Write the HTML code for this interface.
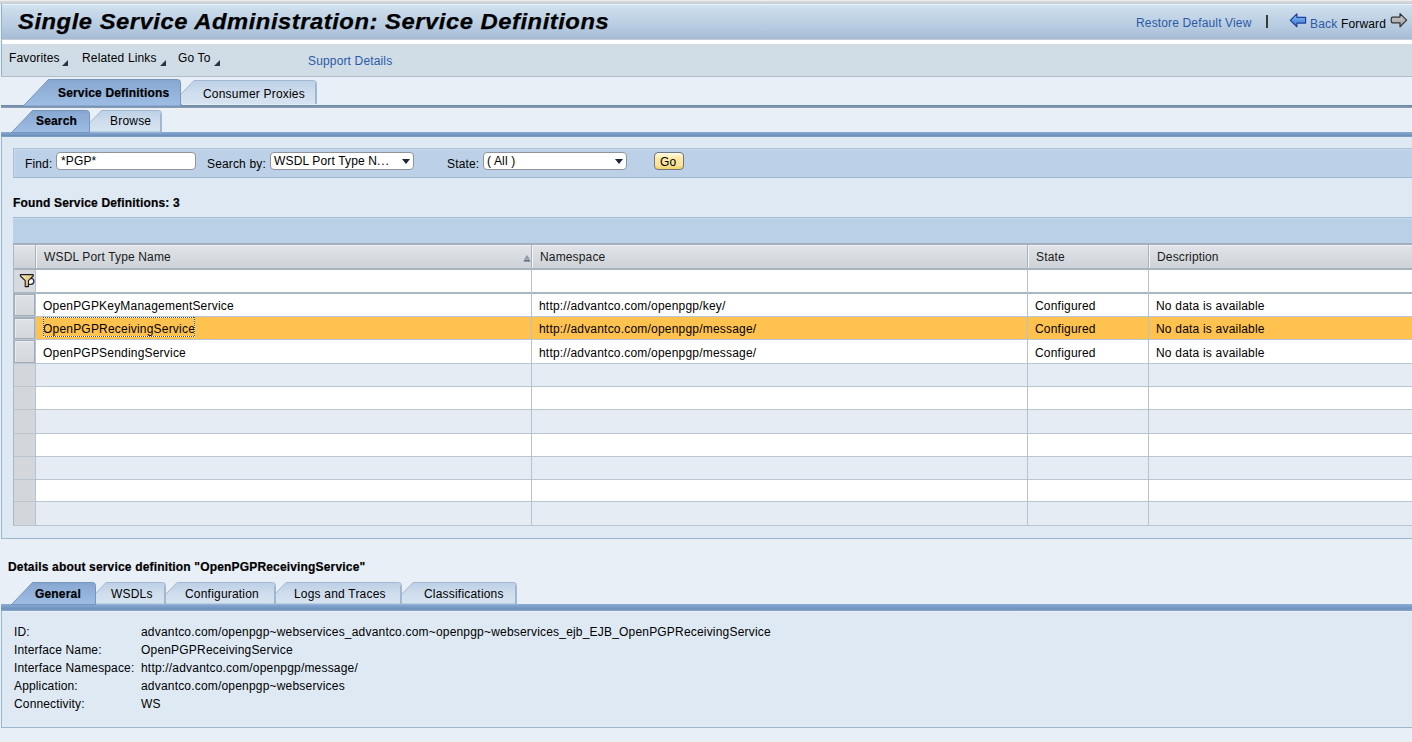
<!DOCTYPE html>
<html><head><meta charset="utf-8"><style>
*{margin:0;padding:0;box-sizing:border-box}
html,body{width:1412px;height:742px;overflow:hidden}
body{background:#e9eff6;font-family:"Liberation Sans",sans-serif;font-size:12px;color:#000;position:relative;letter-spacing:0.15px}
.a{position:absolute;white-space:nowrap;line-height:14px}
.b{position:absolute}
.lnk{color:#2b5aa6}
.tri{position:absolute;width:0;height:0;border-left:6px solid transparent;border-bottom:6px solid #26354a}
.dd{position:absolute;width:0;height:0;border-left:4.5px solid transparent;border-right:4.5px solid transparent;border-top:5px solid #1c2636}
</style></head><body>
<div class="b" style="left:0px;top:0px;width:1412px;height:4px;background:linear-gradient(#eeeeee 0,#eeeeee 1px,#d4d4d4 1px,#d4d4d4 2px,#d0d7df 2px,#d0d7df 3px,#c0ccd6 3px)"></div>
<div class="b" style="left:0px;top:4px;width:1px;height:73px;background:#eef2f6"></div>
<div class="b" style="left:1px;top:4px;width:1411px;height:35px;border-left:1px solid #8fb0cc;background:linear-gradient(#eef3f8 0,#eef3f8 1px,#d3e2ef 1px,#cadbea 6px,#b8cce1 22px,#a9bfd8 33px,#a5bad3 35px)"></div>
<div class="b" style="left:1px;top:39px;width:1411px;height:5px;background:#fff;border-top:1px solid #c4ccd5;border-left:1px solid #8fb0cc"></div>
<div class="a" id="title" style="left:17.5px;top:6.5px;font-size:22px;font-weight:bold;font-style:italic;letter-spacing:0.5px;line-height:30px;transform-origin:0 0;transform:scaleX(1.08);-webkit-text-stroke:0.25px #000">Single Service Administration: Service Definitions</div>
<div class="a lnk" style="left:1136px;top:16px;">Restore Default View</div>
<div class="b" style="left:1266px;top:15px;width:2px;height:13px;background:#3a3a3a"></div>
<svg class="b" style="left:1289px;top:12px" width="18" height="17" viewBox="0 0 18 17"><defs><linearGradient id="gB" x1="0" y1="0" x2="0" y2="1"><stop offset="0" stop-color="#8cc4f4"/><stop offset="0.5" stop-color="#5e9ae2"/><stop offset="1" stop-color="#3f74c8"/></linearGradient></defs><path d="M1.3 8.4 L7.9 1.8 L7.9 5.3 L16.6 5.3 L16.6 11.1 L7.9 11.1 L7.9 14.7 Z" fill="url(#gB)" stroke="#1d3f9e" stroke-width="1.2" stroke-linejoin="round"/></svg>
<div class="a lnk" style="left:1310px;top:17px;">Back</div>
<div class="a" style="left:1341px;top:17px;">Forward</div>
<svg class="b" style="left:1390px;top:12px" width="18" height="17" viewBox="0 0 18 17"><defs><linearGradient id="gFw" x1="0" y1="0" x2="0" y2="1"><stop offset="0" stop-color="#d0d0d0"/><stop offset="1" stop-color="#9a9a9a"/></linearGradient></defs><path d="M16.6 8.2 L10 1.6 L10 5.1 L2.5 5.1 Q1.2 5.1 1.2 7.9 Q1.2 10.8 2.5 10.8 L10 10.8 L10 14.8 Z" fill="url(#gFw)" stroke="#333" stroke-width="1.2" stroke-linejoin="round"/></svg>
<div class="b" style="left:1px;top:44px;width:1411px;height:33px;background:#d0dce6;border-left:1px solid #8fb0cc;border-bottom:1px solid #aebccb"></div>
<div class="a" style="left:9px;top:51px;">Favorites</div>
<div class="tri" style="left:62px;top:60px"></div>
<div class="a" style="left:82px;top:51px;">Related Links</div>
<div class="tri" style="left:160px;top:60px"></div>
<div class="a" style="left:178px;top:51px;">Go To</div>
<div class="tri" style="left:214px;top:60px"></div>
<div class="a lnk" style="left:308px;top:54px;">Support Details</div>
<svg class="b" style="left:0;top:105px" width="1412" height="3" viewBox="0 105 1412 3"><defs><linearGradient id="gL1" x1="0" y1="0" x2="0" y2="1"><stop offset="0" stop-color="#6a86a6"/><stop offset="1" stop-color="#8a9fb6"/></linearGradient></defs><rect x="1" y="105" width="1411" height="3" fill="url(#gL1)"/></svg>
<svg class="b" style="left:0;top:77px" width="1412" height="31" viewBox="0 77 1412 31"><defs><linearGradient id="gA" x1="0" y1="0" x2="0" y2="1"><stop offset="0" stop-color="#84a5cf"/><stop offset="0.15" stop-color="#8babd4"/><stop offset="1" stop-color="#9dbde4"/></linearGradient><linearGradient id="gI" x1="0" y1="0" x2="0" y2="1"><stop offset="0" stop-color="#bccfe5"/><stop offset="0.5" stop-color="#cfdded"/><stop offset="1" stop-color="#d7e3f0"/></linearGradient></defs><path d="M171.2 104.5 L194.0 80.5 L313.5 80.5 Q316.5 80.5 316.5 83.5 L316.5 104.5 Z" fill="url(#gI)" stroke="#a3b9d2" stroke-width="1"/><rect x="315.0" y="83.5" width="1" height="21.0" fill="#9db5cf"/><path d="M23.3 106 L48.5 79.5 L177.5 79.5 Q180.5 79.5 180.5 82.5 L180.5 106 Z" fill="url(#gA)" stroke="#7896bd" stroke-width="1"/><rect x="0" y="0" width="1412" height="0" style="fill:none"/></svg>
<div class="b" style="left:182px;top:104px;width:135px;height:1px;background:#e6edf5"></div>
<svg class="b" style="left:0;top:107px" width="1412" height="31" viewBox="0 107 1412 31"><defs><linearGradient id="gL" x1="0" y1="0" x2="0" y2="1"><stop offset="0" stop-color="#8aabd5"/><stop offset="0.35" stop-color="#7c9fcb"/><stop offset="0.7" stop-color="#6f92bd"/><stop offset="1" stop-color="#86a4c8"/></linearGradient></defs><rect x="0" y="108" width="1412" height="2" fill="#edf1f6"/><rect x="1" y="132" width="1411" height="5" fill="url(#gL)"/></svg>
<svg class="b" style="left:0;top:107px" width="1412" height="26" viewBox="0 107 1412 26"><defs><linearGradient id="gA" x1="0" y1="0" x2="0" y2="1"><stop offset="0" stop-color="#84a5cf"/><stop offset="0.15" stop-color="#8babd4"/><stop offset="1" stop-color="#9dbde4"/></linearGradient><linearGradient id="gI" x1="0" y1="0" x2="0" y2="1"><stop offset="0" stop-color="#bccfe5"/><stop offset="0.5" stop-color="#cfdded"/><stop offset="1" stop-color="#d7e3f0"/></linearGradient></defs><path d="M81.1 132 L101.5 110.5 L158.5 110.5 Q161.5 110.5 161.5 113.5 L161.5 132 Z" fill="url(#gI)" stroke="#a3b9d2" stroke-width="1"/><rect x="160.0" y="113.5" width="1" height="18.5" fill="#9db5cf"/><path d="M11.6 132.5 L32.5 110.5 L86.5 110.5 Q89.5 110.5 89.5 113.5 L89.5 132.5 Z" fill="url(#gA)" stroke="#7896bd" stroke-width="1"/><rect x="0" y="132" width="1412" height="0" style="fill:none"/></svg>
<div class="a" style="left:58px;top:86px;font-weight:bold;letter-spacing:0.17px;-webkit-text-stroke:0.2px #000">Service Definitions</div>
<div class="a" style="left:203px;top:87px;letter-spacing:0.2px">Consumer Proxies</div>
<div class="a" style="left:36px;top:114px;font-weight:bold;letter-spacing:0.17px;-webkit-text-stroke:0.2px #000">Search</div>
<div class="a" style="left:110px;top:114px;letter-spacing:0.2px">Browse</div>
<div class="b" style="left:1px;top:137px;width:1411px;height:402px;background:#dee9f4;border-left:1px solid #9cb6d0;border-bottom:1px solid #9cb6d0"></div>
<div class="b" style="left:13px;top:148px;width:1399px;height:30px;background:#bcd1e7;border-top:1px solid #adc4dd;border-left:1px solid #a9c0da;border-bottom:1px solid #9db5cf;box-shadow:inset 1px 1px 0 #cbdaeb"></div>
<div class="a" style="left:25px;top:157px;">Find:</div>
<div class="b" style="left:56px;top:152px;width:140px;height:18px;background:#fff;border:1px solid #8e949a;border-radius:4px"></div>
<div class="a" style="left:61px;top:154px;">*PGP*</div>
<div class="a" style="left:207px;top:157px;">Search by:</div>
<div class="b" style="left:270px;top:152px;width:143.5px;height:18px;background:#fff;border:1px solid #8e949a;border-radius:4px"></div>
<div class="a" style="left:274px;top:154px;">WSDL Port Type N<span style="letter-spacing:0.9px">...</span></div>
<div class="dd" style="left:401.5px;top:159px"></div>
<div class="a" style="left:447px;top:157px;">State:</div>
<div class="b" style="left:483px;top:152px;width:144px;height:18px;background:#fff;border:1px solid #8e949a;border-radius:4px"></div>
<div class="a" style="left:487px;top:154px;">( All )</div>
<div class="dd" style="left:615px;top:159px"></div>
<div class="b" style="left:654px;top:152px;width:30px;height:18px;background:linear-gradient(#fffbe6 0,#fff3c4 3px,#fde9a6 5px,#fbe39a 12px,#f3d66e 15px);border:1px solid #6f7784;border-radius:4px"></div>
<div class="a" style="left:660px;top:155px;">Go</div>
<div class="a" style="left:13px;top:196px;font-weight:bold;letter-spacing:0.17px;-webkit-text-stroke:0.2px #000">Found Service Definitions: 3</div>
<div class="b" style="left:13px;top:217px;width:1399px;height:27px;background:#bad0e6;border-top:1px solid #a5bcd4;box-shadow:inset 0 1px 0 #c6d8eb"></div>
<div class="b" style="left:13px;top:243px;width:1399px;height:27px;background:linear-gradient(#a4afbb 0,#a4afbb 1.5px,#eef1f3 2px,#eef1f3 3px,#e0e3e7 3px,#d9dde2 12px,#cdd2d8 25px,#a9b3be 25px,#a9b3be 27px)"></div>
<div class="b" style="left:13px;top:243px;width:1px;height:283px;background:#a9b6c3"></div>
<div class="b" style="left:35px;top:245px;width:1px;height:23px;background:#a6b1bc"></div>
<div class="b" style="left:36px;top:245px;width:1px;height:23px;background:#f4f6f8"></div>
<div class="b" style="left:531px;top:245px;width:1px;height:23px;background:#a6b1bc"></div>
<div class="b" style="left:532px;top:245px;width:1px;height:23px;background:#f4f6f8"></div>
<div class="b" style="left:1027px;top:245px;width:1px;height:23px;background:#a6b1bc"></div>
<div class="b" style="left:1028px;top:245px;width:1px;height:23px;background:#f4f6f8"></div>
<div class="b" style="left:1148px;top:245px;width:1px;height:23px;background:#a6b1bc"></div>
<div class="b" style="left:1149px;top:245px;width:1px;height:23px;background:#f4f6f8"></div>
<div class="a" style="left:44px;top:250px;color:#1a1a1a">WSDL Port Type Name</div>
<div class="a" style="left:540px;top:250px;color:#1a1a1a">Namespace</div>
<div class="a" style="left:1036px;top:250px;color:#1a1a1a">State</div>
<div class="a" style="left:1157px;top:250px;color:#1a1a1a">Description</div>
<svg class="b" style="left:523px;top:254px" width="8" height="8" viewBox="0 0 8 8"><path d="M4 1.6 L6.3 5.2 L1.7 5.2 Z" fill="#a0a9b4" stroke="#6d7886" stroke-width="0.6"/><rect x="0.8" y="6.2" width="6.4" height="1.3" fill="#4d5866"/></svg>
<div class="b" style="left:14px;top:270px;width:1398px;height:24px;background:#fff;border-bottom:2px solid #aab6c2"></div>
<div class="b" style="left:14px;top:270px;width:21px;height:22px;background:#d6dade"></div>
<svg class="b" style="left:14px;top:269px" width="22" height="24" viewBox="0 0 22 24"><defs><linearGradient id="gF" x1="0" y1="0" x2="1" y2="1"><stop offset="0" stop-color="#fbf0c8"/><stop offset="1" stop-color="#d4a843"/></linearGradient></defs><path d="M14 9.4 L16.8 9.4 Q19.9 9.4 19.9 12.3 Q19.9 15.3 16.8 15.3 L14 15.3 Z" fill="#f8f9fc" stroke="#23315a" stroke-width="1.3"/><path d="M6.4 5.6 L19.2 5.6 L19.2 7 L14.5 11.6 L14.5 17.6 L11.2 17.6 L11.2 11.6 L6.4 7 Z" fill="url(#gF)" stroke="#1b1b26" stroke-width="1.1" stroke-linejoin="round"/></svg>
<div class="b" style="left:14px;top:294px;width:1398px;height:23px;background:#ffffff;border-bottom:1px solid #b9c5d1"></div>
<div class="b" style="left:14px;top:294px;width:21px;height:22px;background:linear-gradient(#dfe2e6,#d3d7dc);border:1px solid #a3adb7;box-shadow:inset 1px 1px 0 #e8eaed"></div>
<div class="a" style="left:43px;top:299px;letter-spacing:0.2px">OpenPGPKeyManagementService</div>
<div class="a" style="left:539px;top:299px;letter-spacing:0.2px">http://advantco.com/openpgp/key/</div>
<div class="a" style="left:1035px;top:299px;letter-spacing:0.2px">Configured</div>
<div class="a" style="left:1156px;top:299px;letter-spacing:0.2px">No data is available</div>
<div class="b" style="left:14px;top:317px;width:1398px;height:23px;background:#ffc24f;border-bottom:1px solid #b9c5d1"></div>
<div class="b" style="left:14px;top:317px;width:21px;height:22px;background:linear-gradient(#dfe2e6,#d3d7dc);border:1px solid #a3adb7;box-shadow:inset 1px 1px 0 #e8eaed;border-top:2px solid #a4afba"></div>
<div class="a" style="left:43px;top:322px;letter-spacing:0.2px">OpenPGPReceivingService</div>
<div class="a" style="left:539px;top:322px;letter-spacing:0.2px">http://advantco.com/openpgp/message/</div>
<div class="a" style="left:1035px;top:322px;letter-spacing:0.2px">Configured</div>
<div class="a" style="left:1156px;top:322px;letter-spacing:0.2px">No data is available</div>
<div class="b" style="left:14px;top:340px;width:1398px;height:24px;background:#ffffff;border-bottom:1px solid #b9c5d1"></div>
<div class="b" style="left:14px;top:340px;width:21px;height:23px;background:linear-gradient(#dfe2e6,#d3d7dc);border:1px solid #a3adb7;box-shadow:inset 1px 1px 0 #e8eaed"></div>
<div class="a" style="left:43px;top:346px;letter-spacing:0.2px">OpenPGPSendingService</div>
<div class="a" style="left:539px;top:346px;letter-spacing:0.2px">http://advantco.com/openpgp/message/</div>
<div class="a" style="left:1035px;top:346px;letter-spacing:0.2px">Configured</div>
<div class="a" style="left:1156px;top:346px;letter-spacing:0.2px">No data is available</div>
<div class="b" style="left:14px;top:364px;width:1398px;height:23px;background:#e6ecf4;border-bottom:1px solid #b9c5d1"></div>
<div class="b" style="left:14px;top:364px;width:21px;height:22px;background:#d3d7dc"></div>
<div class="b" style="left:14px;top:387px;width:1398px;height:23px;background:#ffffff;border-bottom:1px solid #b9c5d1"></div>
<div class="b" style="left:14px;top:387px;width:21px;height:22px;background:#d3d7dc"></div>
<div class="b" style="left:14px;top:410px;width:1398px;height:24px;background:#e6ecf4;border-bottom:1px solid #b9c5d1"></div>
<div class="b" style="left:14px;top:410px;width:21px;height:23px;background:#d3d7dc"></div>
<div class="b" style="left:14px;top:434px;width:1398px;height:23px;background:#ffffff;border-bottom:1px solid #b9c5d1"></div>
<div class="b" style="left:14px;top:434px;width:21px;height:22px;background:#d3d7dc"></div>
<div class="b" style="left:14px;top:457px;width:1398px;height:23px;background:#e6ecf4;border-bottom:1px solid #b9c5d1"></div>
<div class="b" style="left:14px;top:457px;width:21px;height:22px;background:#d3d7dc"></div>
<div class="b" style="left:14px;top:480px;width:1398px;height:22px;background:#ffffff;border-bottom:1px solid #b9c5d1"></div>
<div class="b" style="left:14px;top:480px;width:21px;height:21px;background:#d3d7dc"></div>
<div class="b" style="left:14px;top:502px;width:1398px;height:24px;background:#e6ecf4;border-bottom:1px solid #b9c5d1"></div>
<div class="b" style="left:14px;top:502px;width:21px;height:23px;background:#d3d7dc"></div>
<div class="b" style="left:35px;top:270px;width:1px;height:255px;background:#b6c2ce"></div>
<div class="b" style="left:531px;top:270px;width:1px;height:255px;background:#b6c2ce"></div>
<div class="b" style="left:1027px;top:270px;width:1px;height:255px;background:#b6c2ce"></div>
<div class="b" style="left:1148px;top:270px;width:1px;height:255px;background:#b6c2ce"></div>
<div class="b" style="left:43px;top:317px;width:152px;height:1px;background:repeating-linear-gradient(90deg,#4a4a4a 0 1px,#fffbe8 1px 2px)"></div>
<div class="b" style="left:43px;top:336px;width:152px;height:1px;background:repeating-linear-gradient(90deg,#4a4a4a 0 1px,#fffbe8 1px 2px)"></div>
<div class="b" style="left:43px;top:317px;width:1px;height:20px;background:repeating-linear-gradient(180deg,#4a4a4a 0 1px,#fffbe8 1px 2px)"></div>
<div class="b" style="left:194px;top:317px;width:1px;height:20px;background:repeating-linear-gradient(180deg,#4a4a4a 0 1px,#fffbe8 1px 2px)"></div>
<div class="a" style="left:8px;top:560px;font-weight:bold;letter-spacing:0.17px;-webkit-text-stroke:0.2px #000">Details about service definition "OpenPGPReceivingService"</div>
<svg class="b" style="left:0;top:604px" width="1412" height="7" viewBox="0 604 1412 7"><defs><linearGradient id="gL2" x1="0" y1="0" x2="0" y2="1"><stop offset="0" stop-color="#8aabd5"/><stop offset="0.35" stop-color="#7c9fcb"/><stop offset="0.7" stop-color="#6f92bd"/><stop offset="1" stop-color="#8aa8cc"/></linearGradient></defs><rect x="1" y="604" width="1411" height="7" fill="url(#gL2)"/></svg>
<svg class="b" style="left:0;top:578px" width="1412" height="28" viewBox="0 578 1412 28"><defs><linearGradient id="gA" x1="0" y1="0" x2="0" y2="1"><stop offset="0" stop-color="#84a5cf"/><stop offset="0.15" stop-color="#8babd4"/><stop offset="1" stop-color="#9dbde4"/></linearGradient><linearGradient id="gI" x1="0" y1="0" x2="0" y2="1"><stop offset="0" stop-color="#bccfe5"/><stop offset="0.5" stop-color="#cfdded"/><stop offset="1" stop-color="#d7e3f0"/></linearGradient></defs><path d="M392.6 604 L413.0 582.5 L513.5 582.5 Q516.5 582.5 516.5 585.5 L516.5 604 Z" fill="url(#gI)" stroke="#a3b9d2" stroke-width="1"/><rect x="515.0" y="585.5" width="1" height="18.5" fill="#9db5cf"/><path d="M265.6 604 L286.0 582.5 L398.5 582.5 Q401.5 582.5 401.5 585.5 L401.5 604 Z" fill="url(#gI)" stroke="#a3b9d2" stroke-width="1"/><rect x="400.0" y="585.5" width="1" height="18.5" fill="#9db5cf"/><path d="M156.6 604 L177.0 582.5 L272.5 582.5 Q275.5 582.5 275.5 585.5 L275.5 604 Z" fill="url(#gI)" stroke="#a3b9d2" stroke-width="1"/><rect x="274.0" y="585.5" width="1" height="18.5" fill="#9db5cf"/><path d="M85.6 604 L106.0 582.5 L162.5 582.5 Q165.5 582.5 165.5 585.5 L165.5 604 Z" fill="url(#gI)" stroke="#a3b9d2" stroke-width="1"/><rect x="164.0" y="585.5" width="1" height="18.5" fill="#9db5cf"/><path d="M11.6 604.5 L32.5 582.5 L92.5 582.5 Q95.5 582.5 95.5 585.5 L95.5 604.5 Z" fill="url(#gA)" stroke="#7896bd" stroke-width="1"/><rect x="0" y="604" width="1412" height="0" style="fill:none"/></svg>
<div class="a" style="left:35px;top:587px;font-weight:bold;letter-spacing:0.17px;-webkit-text-stroke:0.2px #000">General</div>
<div class="a" style="left:111px;top:587px;letter-spacing:0.2px">WSDLs</div>
<div class="a" style="left:185px;top:587px;letter-spacing:0.2px">Configuration</div>
<div class="a" style="left:294px;top:587px;letter-spacing:0.2px">Logs and Traces</div>
<div class="a" style="left:424px;top:587px;letter-spacing:0.2px">Classifications</div>
<div class="b" style="left:1px;top:611px;width:1411px;height:117px;background:#dee9f4;border-left:1px solid #9cb6d0;border-bottom:1px solid #9cb6d0;box-shadow:inset 0 1px 0 #e9f0f8"></div>
<div class="a" style="left:14px;top:625px;">ID:</div>
<div class="a" style="left:141px;top:625px;letter-spacing:0.19px">advantco.com/openpgp~webservices_advantco.com~openpgp~webservices_ejb_EJB_OpenPGPReceivingService</div>
<div class="a" style="left:14px;top:643px;">Interface Name:</div>
<div class="a" style="left:141px;top:643px;letter-spacing:0.19px">OpenPGPReceivingService</div>
<div class="a" style="left:14px;top:661px;">Interface Namespace:</div>
<div class="a" style="left:141px;top:661px;letter-spacing:0.19px">http://advantco.com/openpgp/message/</div>
<div class="a" style="left:14px;top:679px;">Application:</div>
<div class="a" style="left:141px;top:679px;letter-spacing:0.19px">advantco.com/openpgp~webservices</div>
<div class="a" style="left:14px;top:697px;">Connectivity:</div>
<div class="a" style="left:141px;top:697px;letter-spacing:0.19px">WS</div>
</body></html>
